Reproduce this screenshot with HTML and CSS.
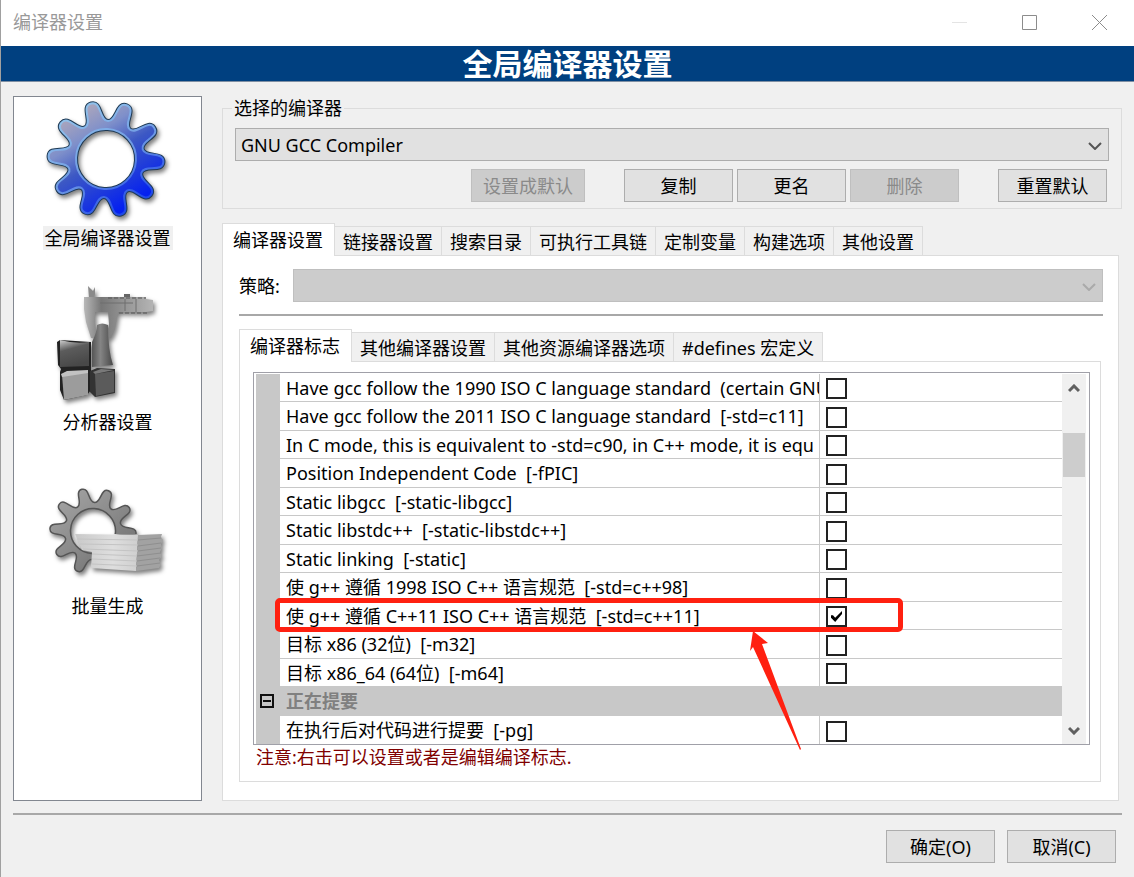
FILE: index.html
```html
<!DOCTYPE html>
<html lang="zh-CN">
<head>
  <meta charset="utf-8">
  <title>编译器设置</title>
  <link rel="stylesheet" href="styles.css">
</head>

<body>
  <div class="window">
    <header class="title-bar">
      <span class="title">编译器设置</span>
      <button type="button" class="win-btn minimize" aria-label="最小化"><svg width="15" height="15" viewBox="0 0 15 15"><path d="M0 7.500H15"/></svg></button>
      <button type="button" class="win-btn" aria-label="最大化"><svg width="15" height="15" viewBox="0 0 15 15"><path d="M.5 .5H14.500V14.500H.5Z"/></svg></button>
      <button type="button" class="win-btn" aria-label="关闭"><svg width="15" height="15" viewBox="0 0 15 15"><path d="M0 0L15 15M15 0L0 15"/></svg></button>
    </header>
    <h1 class="banner">全局编译器设置</h1>

    <div class="content">
      <nav class="sidebar">
        <a href="#" class="side-item selected">
          <svg width="128" height="128" viewBox="0 0 128 128">
            <defs>
              <path id="gear" fill-rule="evenodd" d="M57.5 0C57.5 11 38.9 3.1 36.1 11.7S53 24.9 46.5 33.8S29.6 25.4 22.3 30.7S28.3 51.3 17.8 54.7S9 38 0 38S-7.3 58.1 -17.8 54.7S-15 36 -22.3 30.7S-40 42.7 -46.5 33.8S-33.3 20.3 -36.1 11.7S-57.5 11 -57.5 0S-38.9 -3.1 -36.1 -11.7S-53 -24.9 -46.5 -33.8S-29.6 -25.4 -22.3 -30.7S-28.3 -51.3 -17.8 -54.7S-9 -38 0 -38S7.3 -58.1 17.8 -54.7S15 -36 22.3 -30.7S40 -42.7 46.5 -33.8S33.3 -20.3 36.1 -11.7S57.5 -11 57.5 0ZM30 0A30 30 0 1 0 -30 0A30 30 0 1 0 30 0Z"/>
              <linearGradient id="blue" gradientUnits="userSpaceOnUse" x1="-30" y1="-45" x2="28" y2="42">
                <stop offset="0" stop-color="#a9a5bd"/>
                <stop offset=".25" stop-color="#7e8fca"/>
                <stop offset=".5" stop-color="#3c58c4"/>
                <stop offset="1" stop-color="#0420f0"/>
              </linearGradient>
              <linearGradient id="rim" gradientUnits="userSpaceOnUse" x1="-30" y1="-45" x2="30" y2="45">
                <stop offset="0" stop-color="#8fc0ea"/>
                <stop offset=".5" stop-color="#6f9be4"/>
                <stop offset="1" stop-color="#1f48e8"/>
              </linearGradient>
              <linearGradient id="grey" x1="0" y1="0" x2="1" y2="1">
                <stop offset="0" stop-color="#a8a8a8"/>
                <stop offset=".5" stop-color="#8a8a8a"/>
                <stop offset="1" stop-color="#686868"/>
              </linearGradient>
            </defs>
            <g class="shadow">
              <g transform="translate(62 61) rotate(3)">
                <use href="#gear" fill="none" stroke="#1e3a55" stroke-width="4"/>
                <use href="#gear" fill="url(#blue)" stroke="url(#rim)" stroke-width="2"/>
              </g>
            </g>
          </svg>
          <span>全局编译器设置</span>
        </a>
        <a href="#" class="side-item">
          <svg width="128" height="128" viewBox="0 0 128 128">
            <defs>
              <linearGradient id="steel" x1="0" y1="0" x2="1" y2="0">
                <stop offset="0" stop-color="#b8b8b8"/>
                <stop offset=".25" stop-color="#777"/>
                <stop offset=".6" stop-color="#969696"/>
                <stop offset="1" stop-color="#b4b4b4"/>
              </linearGradient>
              <linearGradient id="dark" x1="0" y1="0" x2=".3" y2="1">
                <stop offset="0" stop-color="#d0d0d0"/>
                <stop offset=".4" stop-color="#5c5c5c"/>
                <stop offset="1" stop-color="#484848"/>
              </linearGradient>
              <linearGradient id="tall" x1="0" y1="0" x2="1" y2="0">
                <stop offset="0" stop-color="#555"/>
                <stop offset=".4" stop-color="#858585"/>
                <stop offset="1" stop-color="#484848"/>
              </linearGradient>
            </defs>
            <g class="shadow" transform="translate(-1 0)">
              <path fill="#8a8a8a" d="M45 4L48 7L50 9L52 5V12L51 16H46Z"/>
              <path fill="#666" d="M81 15V12H87V15Z"/>
              <path fill="url(#steel)" d="M41 15H103V17L110 18V29L103 30H75L72 47L68 56H63L66 42L65 30H52V40L53 50L54 56H48L43 40L41 27Z"/>
              <path stroke="#555" stroke-dasharray="4 2" d="M65 16H103M76 31H104"/>
              <path stroke="#6f6f6f" d="M57 21H90M82 17V29M93 17V30"/>
              <path fill="#222" d="M17 58L14 60L15 83L18 87L17 90L17 108L21 118L44 113L48 108V60Z"/>
              <path fill="url(#dark)" d="M17 58Q32 62 46 60V84L17 85Z"/>
              <path fill="url(#tall)" d="M49 60Q54 50 54 43Q59 40 65 43Q65 68 70 83L49 85Z"/>
              <path fill="#333" d="M47 89L54 86L72 87V111L52 115L47 110Z"/>
              <path fill="#5b5b5b" d="M52 92L71 89V110L53 114Z"/>
              <path fill="#797979" d="M50 90L58 87L71 88L52 92Z"/>
              <path fill="#9c9c9c" d="M19 93L45 90V113L21 118Z"/>
              <path fill="#c2c2c2" d="M18 92L24 89L45 88V91L19 95Z"/>
            </g>
          </svg>
          <span>分析器设置</span>
        </a>
        <a href="#" class="side-item">
          <svg width="128" height="128" viewBox="0 0 128 128">
            <defs>
              <linearGradient id="sheet" x1="0" y1="0" x2="1" y2="0">
                <stop offset="0" stop-color="#c9c9c9"/>
                <stop offset=".6" stop-color="#dedede"/>
                <stop offset="1" stop-color="#cfcfcf"/>
              </linearGradient>
            </defs>
            <g class="shadow" transform="translate(-1 0)">
              <clipPath id="cut"><path d="M0 0H128V68H32L39 84L49 86V128H0Z"/></clipPath>
              <g clip-path="url(#cut)">
                <use href="#gear" transform="translate(50 65) rotate(3) scale(.75)" fill="url(#grey)" stroke="#555" stroke-width="2"/>
              </g>
              <path fill="url(#sheet)" d="M32 68L95 69L93 105L48 102L49 86L39 84Z"/>
              <path fill="#a2a2a2" d="M95 69L119 68L118 71L120 74L118 78L119 82L117 86L119 90L116 94L118 98L116 102L93 105Z"/>
              <path fill="none" stroke="#c4c4c4" d="M34 73L95 74M37 78L95 79M40 83L95 85M49 88L94 90M49 93L94 95M49 98L94 100"/>
              <path fill="none" stroke="#8f8f8f" d="M95 74L118 72M95 80L118 77M95 85L118 82M94 90L118 87M94 95L117 92M94 100L117 97"/>
            </g>
          </svg>
          <span>批量生成</span>
        </a>
      </nav>

      <main class="main">
        <fieldset class="compiler-box">
          <legend><label for="compiler">选择的编译器</label></legend>
          <div class="combo">
            <select id="compiler">
              <option>GNU GCC Compiler</option>
            </select>
            <svg class="arrow" width="14" height="8" viewBox="0 0 14 8"><path d="M1 1L7 7L13 1"/></svg>
          </div>
          <div class="button-row">
            <button type="button" class="btn wide" disabled>设置成默认</button>
            <div class="btn-group">
              <button type="button" class="btn">复制</button>
              <button type="button" class="btn">更名</button>
              <button type="button" class="btn" disabled>删除</button>
            </div>
            <button type="button" class="btn">重置默认</button>
          </div>
        </fieldset>

        <div class="tabs">
          <button type="button" class="tab active">编译器设置</button>
          <button type="button" class="tab">链接器设置</button>
          <button type="button" class="tab">搜索目录</button>
          <button type="button" class="tab">可执行工具链</button>
          <button type="button" class="tab">定制变量</button>
          <button type="button" class="tab">构建选项</button>
          <button type="button" class="tab">其他设置</button>
        </div>
        <section class="panel">
          <div class="policy">
            <label for="policy">策略:</label>
            <div class="combo">
              <select id="policy" disabled></select>
              <svg class="arrow" width="14" height="8" viewBox="0 0 14 8"><path d="M1 1L7 7L13 1"/></svg>
            </div>
          </div>
          <hr>

          <div class="tabs">
            <button type="button" class="tab active">编译器标志</button>
            <button type="button" class="tab">其他编译器设置</button>
            <button type="button" class="tab">其他资源编译器选项</button>
            <button type="button" class="tab">#defines 宏定义</button>
          </div>
          <div class="panel flags-panel">
            <div class="flag-list">
              <table class="flags">
                <colgroup>
                  <col class="col-gutter">
                  <col class="col-name">
                  <col>
                </colgroup>
                <tbody>
                  <tr><td class="gutter"></td><td class="name"><label for="f1">Have gcc follow the 1990 ISO C language standard  (certain GNU</label></td><td class="value"><input type="checkbox" id="f1"></td></tr>
                  <tr><td class="gutter"></td><td class="name"><label for="f2">Have gcc follow the 2011 ISO C language standard  [-std=c11]</label></td><td class="value"><input type="checkbox" id="f2"></td></tr>
                  <tr><td class="gutter"></td><td class="name"><label for="f3">In C mode, this is equivalent to -std=c90, in C++ mode, it is equ</label></td><td class="value"><input type="checkbox" id="f3"></td></tr>
                  <tr><td class="gutter"></td><td class="name"><label for="f4">Position Independent Code  [-fPIC]</label></td><td class="value"><input type="checkbox" id="f4"></td></tr>
                  <tr><td class="gutter"></td><td class="name"><label for="f5">Static libgcc  [-static-libgcc]</label></td><td class="value"><input type="checkbox" id="f5"></td></tr>
                  <tr><td class="gutter"></td><td class="name"><label for="f6">Static libstdc++  [-static-libstdc++]</label></td><td class="value"><input type="checkbox" id="f6"></td></tr>
                  <tr><td class="gutter"></td><td class="name"><label for="f7">Static linking  [-static]</label></td><td class="value"><input type="checkbox" id="f7"></td></tr>
                  <tr><td class="gutter"></td><td class="name"><label for="f8">使 g++ 遵循 1998 ISO C++ 语言规范  [-std=c++98]</label></td><td class="value"><input type="checkbox" id="f8"></td></tr>
                  <tr><td class="gutter"></td><td class="name"><label for="f9">使 g++ 遵循 C++11 ISO C++ 语言规范  [-std=c++11]</label></td><td class="value"><input type="checkbox" id="f9" checked></td></tr>
                  <tr><td class="gutter"></td><td class="name"><label for="f10">目标 x86 (32位)  [-m32]</label></td><td class="value"><input type="checkbox" id="f10"></td></tr>
                  <tr><td class="gutter"></td><td class="name"><label for="f11">目标 x86_64 (64位)  [-m64]</label></td><td class="value"><input type="checkbox" id="f11"></td></tr>
                  <tr class="category"><td class="gutter"><button type="button" class="collapse" aria-label="折叠"></button></td><th colspan="2">正在提要</th></tr>
                  <tr><td class="gutter"></td><td class="name"><label for="f12">在执行后对代码进行提要  [-pg]</label></td><td class="value"><input type="checkbox" id="f12"></td></tr>
                </tbody>
              </table>
              <div class="scrollbar">
                <button type="button" class="scroll-btn" aria-label="向上"><svg width="12" height="9" viewBox="0 0 12 9"><path d="M1 7L6 2L11 7"/></svg></button>
                <div class="track"><div class="thumb"></div></div>
                <button type="button" class="scroll-btn" aria-label="向下"><svg width="12" height="9" viewBox="0 0 12 9"><path d="M1 2L6 7L11 2"/></svg></button>
              </div>
              <!-- highlight around the C++11 flag -->
              <div class="mark-box"></div>
              <svg class="mark-arrow" width="54" height="120" viewBox="0 0 54 120"><path d="M4 0L19 12L13 13L52 118L51 119L4 16L1 20Z"/></svg>
            </div>
            <p class="note">注意:右击可以设置或者是编辑编译标志.</p>
          </div>
        </section>
      </main>
    </div>

    <footer class="footer">
      <button type="button" class="btn">确定(O)</button>
      <button type="button" class="btn">取消(C)</button>
    </footer>
  </div>
</body>
</html>
```

FILE: styles.css
```css
* {
  box-sizing: border-box;
}

body {
  margin: 0;
  background-color: #f0f0f0;
  color: #000;
  font-family: "Noto Sans", "Noto Sans CJK SC", sans-serif;
  font-size: 18px;
  line-height: 24px;
}

button,
select {
  font: inherit;
  color: inherit;
  border-radius: 0;
}

.window {
  display: flex;
  flex-direction: column;
  min-height: 100vh;
  border-left: 1px solid #a0a0a0;
}

/* title bar */
.title-bar {
  display: flex;
  align-items: center;
  height: 46px;
  padding-left: 12px;
  padding-bottom: 2px;
  background-color: #fff;
}

.title {
  flex: 1;
  color: #999;
}

.win-btn {
  display: flex;
  align-items: center;
  justify-content: center;
  width: 70px;
  height: 44px;
  padding: 0;
  border: none;
  background: none;
}

.win-btn path {
  fill: none;
  stroke: #8c8c8c;
}

.minimize path {
  stroke: #e4e4e4;
}

.banner {
  margin: 0;
  height: 36px;
  border-bottom: 1px solid #7f8fa3;
  background-color: #004080;
  color: #fff;
  font-size: 30px;
  font-weight: 700;
  line-height: 36px;
  text-align: center;
}

.content {
  flex: 1;
  display: flex;
  gap: 20px;
  margin: 0 12px;
  padding: 14px 0 12px;
  border-bottom: 2px solid #a8a8a8;
}

/* left list */
.sidebar {
  display: flex;
  flex-direction: column;
  align-items: center;
  gap: 32px;
  width: 189px;
  padding-top: 1px;
  border: 1px solid #828790;
  background-color: #fff;
}

.side-item {
  display: flex;
  flex-direction: column;
  align-items: center;
  color: #000;
  text-decoration: none;
}

.side-item span {
  padding: 0 2px;
}

.side-item.selected span {
  background-color: #f0f0f0;
}

.shadow {
  filter: drop-shadow(2px 3px 2px rgba(0, 0, 0, 0.5));
}

.main {
  flex: 1;
  display: flex;
  flex-direction: column;
  min-width: 0;
}

.compiler-box {
  margin: 0 0 14px;
  padding: 8px 12px 6px;
  border: 1px solid #dcdcdc;
}

.compiler-box legend {
  padding: 0 2px;
  margin-left: -3px;
}

.combo {
  position: relative;
  flex: 1;
}

.combo select {
  appearance: none;
  display: block;
  width: 100%;
  height: 33px;
  padding: 0 5px;
  border: 1px solid #adadad;
  background-color: #e1e1e1;
}

.combo select:disabled {
  border-color: #bfbfbf;
  background-color: #ccc;
  opacity: 1;
}

.arrow {
  position: absolute;
  top: 14px;
  right: 7px;
  pointer-events: none;
}

.arrow path {
  fill: none;
  stroke: #555;
  stroke-width: 2;
}

select:disabled + .arrow path {
  stroke: #aaa;
}

.button-row {
  display: flex;
  justify-content: flex-end;
  gap: 39px;
  padding: 8px 2px 0 0;
}

.btn-group {
  display: flex;
  gap: 4px;
}

.btn {
  min-width: 109px;
  height: 33px;
  padding: 0 10px;
  border: 1px solid #adadad;
  background-color: #e1e1e1;
}

.btn.wide {
  min-width: 114px;
}

.btn:disabled {
  border-color: #bfbfbf;
  background-color: #ccc;
  color: #8a8a8a;
}

/* notebooks */
.tabs {
  display: flex;
  align-items: flex-end;
}

.tab {
  height: 30px;
  margin-bottom: -1px;
  padding: 2px 8px 0;
  border: 1px solid #dcdcdc;
  border-left: none;
  background-color: #f0f0f0;
}

.tab.active {
  position: relative;
  height: 33px;
  padding: 0 11px 0 10px;
  border-left: 1px solid #dcdcdc;
  border-bottom: none;
  background-color: #fff;
}

.panel {
  flex: 1;
  margin-right: 3px;
  padding: 13px 15px 17px 16px;
  border: 1px solid #dcdcdc;
  background-color: #fff;
}

.policy {
  display: flex;
  align-items: center;
  gap: 13px;
}

.panel hr {
  height: 2px;
  margin: 12px 0 13px;
  border: none;
  background-color: #a8a8a8;
}

.flags-panel {
  margin-right: 2px;
  padding: 10px 10px 12px 13px;
}

.flag-list {
  position: relative;
  display: flex;
  padding: 1px 3px 0 2px;
  border: 1px solid #a0a0a8;
}

.flags {
  flex: 1;
  width: 0;
  table-layout: fixed;
  border-collapse: separate;
  border-spacing: 0;
}

.col-gutter {
  width: 24px;
}

.col-name {
  width: 540px;
}

.flags td,
.flags th {
  height: 28px;
  padding: 0;
  border-bottom: 1px solid #c8c8c8;
  line-height: 24px;
  text-align: left;
}

.flags tr:nth-child(even) td {
  height: 29px;
}

.flags tr:last-child td {
  border-bottom: none;
}

.flags .gutter,
.flags .category th {
  border-color: #c8c8c8;
  background-color: #c8c8c8;
}

.flags .category th {
  padding-left: 6px;
  color: #808080;
  font-weight: 700;
}

.flags .name {
  overflow: hidden;
  padding-left: 6px;
  border-right: 1px solid #c8c8c8;
  white-space: pre;
}

.flags .value {
  padding: 2px 0 0 6px;
}

.value input {
  appearance: none;
  display: block;
  width: 21px;
  height: 21px;
  margin: 0;
  border: 2px solid #222;
  background-color: #fff;
}

.value input:checked::after {
  content: "";
  display: block;
  width: 11px;
  height: 11px;
  margin: 3px;
  background-color: #000;
  clip-path: polygon(0 38%, 18% 38%, 38% 62%, 100% 0, 100% 28%, 38% 100%, 0 62%);
}

.collapse {
  position: relative;
  display: block;
  width: 14px;
  height: 14px;
  margin-left: 4px;
  padding: 0;
  border: 2px solid #111;
  background: none;
}

.collapse::after {
  content: "";
  position: absolute;
  top: 4px;
  left: 1px;
  width: 8px;
  height: 2px;
  background-color: #111;
}

.scrollbar {
  display: flex;
  flex-direction: column;
  width: 24px;
  background-color: #f0f0f0;
}

.scroll-btn {
  display: flex;
  align-items: center;
  justify-content: center;
  height: 28px;
  padding: 0;
  border: none;
  background: none;
}

.scroll-btn path {
  fill: none;
  stroke: #606060;
  stroke-width: 3;
}

.track {
  flex: 1;
  padding-top: 31px;
}

.thumb {
  height: 44px;
  margin: 0 1px;
  background-color: #cdcdcd;
}

.mark-box {
  position: absolute;
  top: 225px;
  left: 21px;
  width: 628px;
  height: 34px;
  border: 5px solid #ff2010;
  border-radius: 5px;
  pointer-events: none;
}

.mark-arrow {
  position: absolute;
  top: 258px;
  left: 495px;
  fill: #ff2010;
  pointer-events: none;
}

.note {
  margin: 0;
  padding-left: 3px;
  color: #800000;
}

.footer {
  display: flex;
  justify-content: flex-end;
  gap: 12px;
  padding: 15px 18px 14px;
}
```
